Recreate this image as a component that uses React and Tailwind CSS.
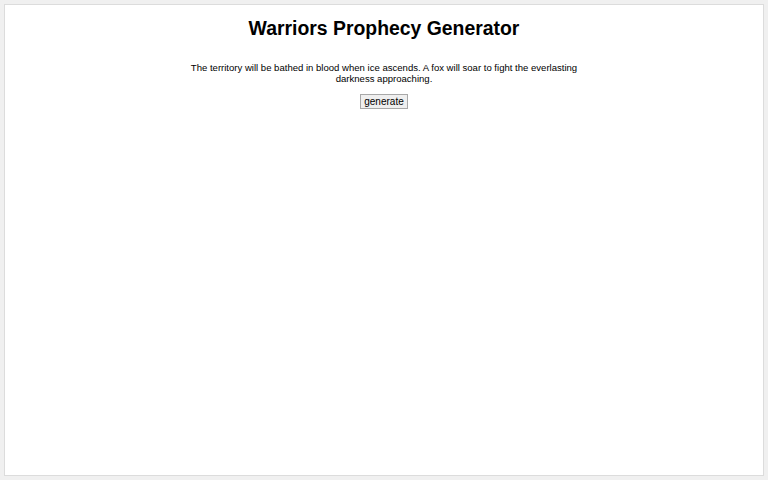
export default function App() {
  return (
    <div className="h-[480px] bg-[#f0f0f0] p-[4px]" style={{ fontFamily: '"Liberation Sans", Arial, sans-serif' }}>
      <div className="h-full border border-[#dcdcdc] bg-white flex flex-col items-center">
        <h1 className="mt-[12px] text-[19.4px] font-bold text-black leading-[22px]">Warriors Prophecy Generator</h1>
        <p className="mt-[23px] max-w-[400px] text-center text-[9.55px] leading-[11px] text-black">
          The territory will be bathed in blood when ice ascends. A fox will soar to fight the everlasting
          darkness approaching.
        </p>
        <button className="mt-[10px] px-[3px] h-[15px] text-[10px] leading-[13px] text-black bg-[#efefef] border border-[#a8a8a8]">
          generate
        </button>
      </div>
    </div>
  );
}
